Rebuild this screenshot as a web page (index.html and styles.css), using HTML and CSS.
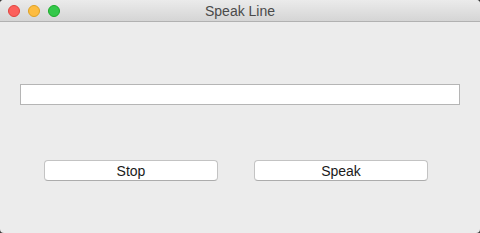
FILE: index.html
```html
<!DOCTYPE html>
<html lang="en">
<head>
  <meta charset="UTF-8">
  <title>Speak Line</title>
  <link rel="stylesheet" href="styles.css">
</head>
<body>
  <div class="window">
    <div class="title-bar">
      <div class="lights">
        <span class="light close"></span>
        <span class="light minimize"></span>
        <span class="light zoom"></span>
      </div>
      <div class="title">Speak Line</div>
    </div>
    <div class="content">
      <input class="line-field" type="text">
      <div class="buttons">
        <button class="btn">Stop</button>
        <button class="btn">Speak</button>
      </div>
    </div>
  </div>
</body>
</html>
```

FILE: styles.css
```css
html, body {
  margin: 0;
  padding: 0;
  background: #3a3a3a;
}

body {
  width: 480px;
  height: 233px;
  font-family: 'Liberation Sans', Arial, sans-serif;
}

.window {
  width: 480px;
  height: 233px;
  background: #ececec;
  border-radius: 4px;
  overflow: hidden;
  display: flex;
  flex-direction: column;
}

.title-bar {
  position: relative;
  height: 21px;
  background: linear-gradient(#ebebeb, #d5d5d5);
  border-bottom: 1px solid #b1b1b1;
  display: flex;
  align-items: center;
  justify-content: center;
}

.lights {
  position: absolute;
  left: 8px;
  top: 5px;
  display: flex;
  gap: 8px;
}

.light {
  width: 12px;
  height: 12px;
  border-radius: 50%;
  box-sizing: border-box;
}

.close {
  background: #fc605c;
  border: 1px solid #e0443e;
}

.minimize {
  background: #fdbc40;
  border: 1px solid #dea123;
}

.zoom {
  background: #34c84a;
  border: 1px solid #1aab29;
}

.title {
  font-size: 14px;
  color: #4a4a4a;
  margin-top: 1px;
}

.content {
  display: flex;
  flex-direction: column;
  padding: 62px 20px 0 20px;
}

.line-field {
  box-sizing: border-box;
  width: 440px;
  height: 21px;
  margin: 0;
  border: 1px solid #b5b5b5;
  background: #fff;
  outline: none;
}

.buttons {
  display: flex;
  gap: 36px;
  margin-top: 55px;
  padding-left: 24px;
}

.btn {
  box-sizing: border-box;
  width: 174px;
  height: 21px;
  margin: 0;
  padding: 0;
  background: #fff;
  border: 1px solid #c3c3c3;
  border-bottom-color: #acacac;
  border-radius: 4px;
  font-family: 'Liberation Sans', Arial, sans-serif;
  font-size: 14px;
  color: #1a1a1a;
}
```
